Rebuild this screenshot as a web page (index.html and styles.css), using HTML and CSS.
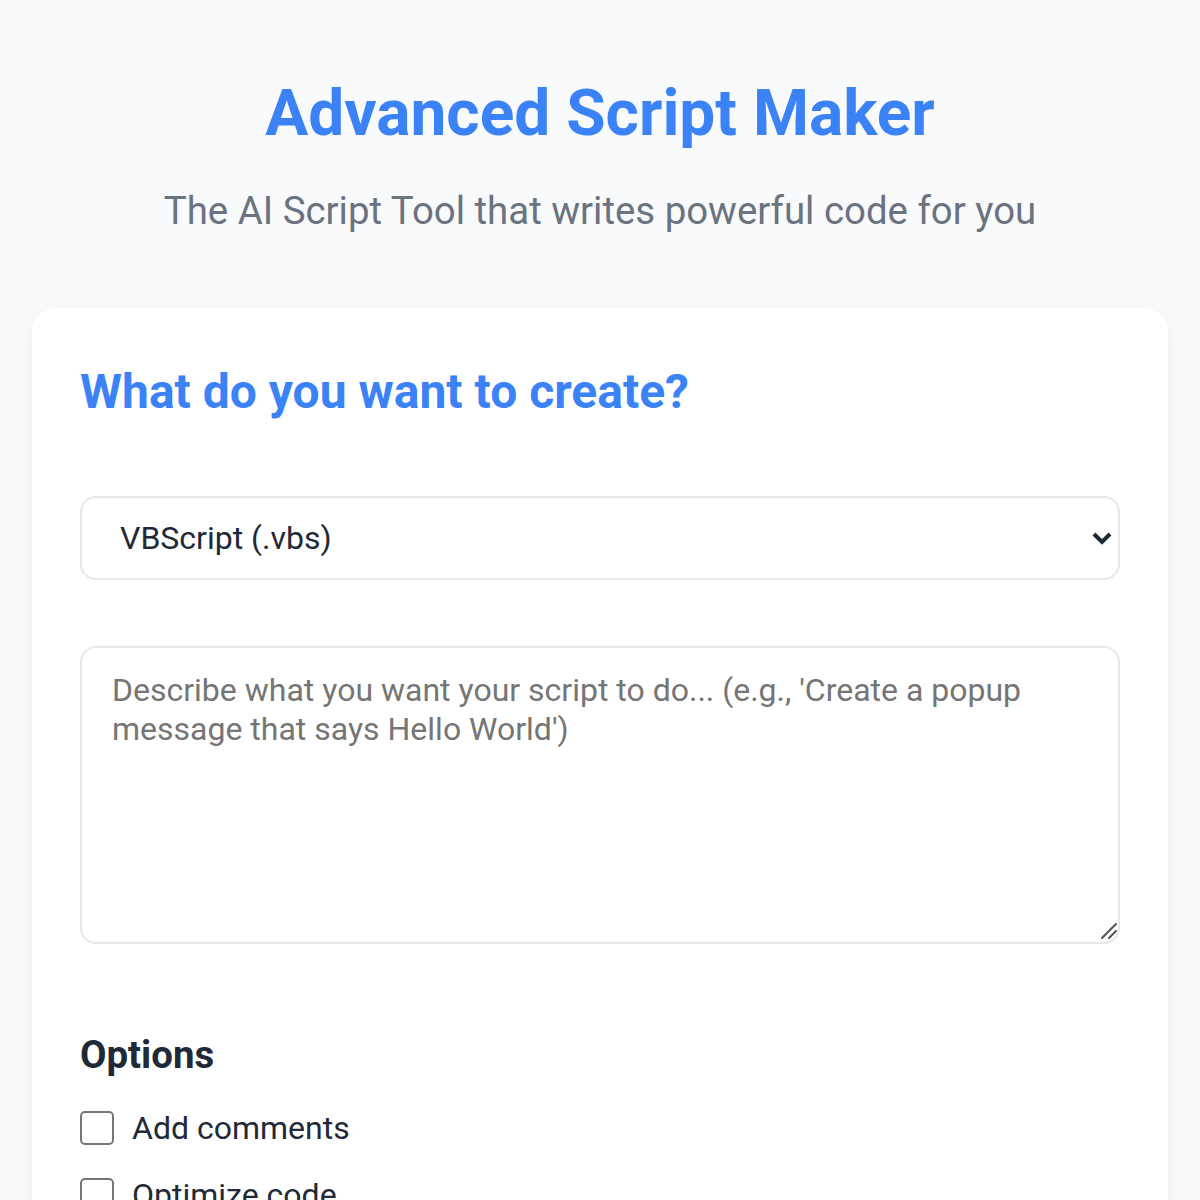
FILE: index.html
```html
<!DOCTYPE html>
<html lang="en">
<head>
  <meta charset="UTF-8">
  <meta name="viewport" content="width=device-width, initial-scale=1.0">
  <title>Advanced Script Maker</title>
  <link rel="stylesheet" href="styles.css">
</head>
<body>
<div class="container">
  <div class="header">
    <h1>Advanced Script Maker</h1>
    <p class="subtitle">The AI Script Tool that writes powerful code for you</p>
  </div>

  <div class="card">
    <h2>What do you want to create?</h2>

    <select class="script-type">
      <option>VBScript (.vbs)</option>
      <option>Batch (.bat)</option>
      <option>PowerShell (.ps1)</option>
      <option>Python (.py)</option>
    </select>

    <div class="prompt-wrap">
      <textarea class="prompt" placeholder="Describe what you want your script to do... (e.g., 'Create a popup message that says Hello World')"></textarea>
      <!-- resize grip -->
      <svg class="grip" width="18" height="18" viewBox="0 0 18 18">
        <path d="M2 16 L16 2 M9 16 L16 9" stroke="#555" stroke-width="2" stroke-linecap="round"/>
      </svg>
    </div>

    <h3>Options</h3>
    <label class="option"><input type="checkbox"> Add comments</label>
    <label class="option"><input type="checkbox"> Optimize code</label>
    <label class="option"><input type="checkbox"> Add error handling</label>
  </div>
</div>
</body>
</html>
```

FILE: styles.css
```css
    body {
      font-family: 'Roboto', 'Liberation Sans', sans-serif;
      background: #f8fafc;
      margin: 0;
      color: #1f2937;
    }
    .container {
      padding: 76px 32px 40px;
    }
    .header {
      text-align: center;
    }
    h1 {
      font-size: 64px;
      line-height: 1.2;
      font-weight: 700;
      color: #3b82f6;
      margin: 0 0 29px;
    }
    .subtitle {
      font-size: 38.4px;
      line-height: 1.5;
      color: #6b7280;
      margin: 0 0 69px;
    }
    .card {
      background: #fff;
      border-radius: 24px;
      padding: 48px 48px 60px;
      box-shadow: 0 8px 24px rgba(15, 23, 42, 0.05);
    }
    h2 {
      font-size: 48px;
      line-height: 1.5;
      font-weight: 700;
      color: #3b82f6;
      margin: 0 0 68px;
    }
    .script-type {
      display: block;
      width: 100%;
      height: 84px;
      padding: 0 60px 0 38px;
      font-family: inherit;
      font-size: 32px;
      color: #1f2937;
      background: #fff url("data:image/svg+xml;utf8,<svg xmlns='http://www.w3.org/2000/svg' width='22' height='14' viewBox='0 0 22 14'><path d='M3 3 L11 11 L19 3' fill='none' stroke='%231f2937' stroke-width='4'/></svg>") no-repeat right 5px center;
      border: 2px solid #e5e7eb;
      border-radius: 16px;
      appearance: none;
      -webkit-appearance: none;
      margin: 0 0 66px;
    }
    .prompt-wrap {
      position: relative;
    }
    .prompt {
      display: block;
      box-sizing: border-box;
      width: 100%;
      height: 298px;
      padding: 23px 30px;
      font-family: inherit;
      font-size: 32px;
      line-height: 1.2;
      color: #1f2937;
      border: 2px solid #e5e7eb;
      border-radius: 16px;
      resize: none;
    }
    .prompt::placeholder {
      color: #757575;
    }
    .grip {
      position: absolute;
      right: 2px;
      bottom: 4px;
    }
    h3 {
      font-size: 38.4px;
      line-height: 1.5;
      font-weight: 700;
      color: #1f2937;
      margin: 82px 0 20px;
    }
    .option {
      display: flex;
      align-items: center;
      gap: 18px;
      font-size: 32px;
      line-height: 1.5;
      margin-bottom: 19px;
    }
    .option input {
      appearance: none;
      -webkit-appearance: none;
      width: 34px;
      height: 34px;
      margin: 0;
      border: 2px solid #767676;
      border-radius: 5px;
      background: #fff;
    }
```
